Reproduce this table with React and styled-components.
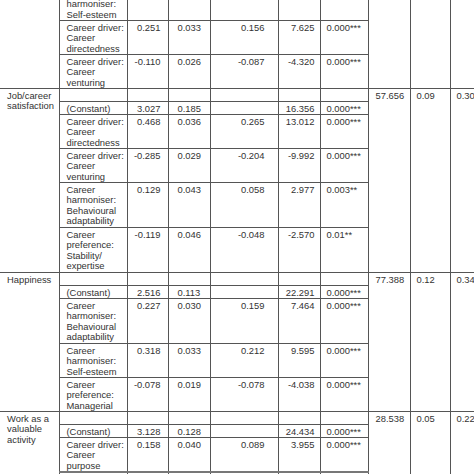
import React from 'react';
import styled, { createGlobalStyle } from 'styled-components';

const GlobalStyle = createGlobalStyle`
  html, body {
    margin: 0;
    padding: 0;
    background: #fff;
    overflow: hidden;
  }
`;

const Page = styled.div`
  width: 474px;
  height: 474px;
  overflow: hidden;
  background: #fff;
`;

const Table = styled.table`
  border-collapse: collapse;
  table-layout: fixed;
  width: 510px;
  margin-top: -14px;
  font-family: "Liberation Sans", Arial, sans-serif;
  font-size: 9.4px;
  line-height: 10.5px;
  color: #333;
`;

const Col = styled.col`
  width: ${p => p.$w}px;
`;

const Row = styled.tr`
  height: ${p => p.$h}px;
`;

const Cell = styled.td`
  border: 1px solid #555;
  border-top-width: ${p => (p.$thickTop ? '2px' : '1px')};
  border-top-color: ${p => (p.$thickTop ? '#777' : '#555')};
  padding: 1.5px ${p => p.$right || 2}px 0 ${p => p.$left || 6}px;
  vertical-align: top;
  text-align: ${p => p.$align || 'left'};
  white-space: nowrap;
  overflow: hidden;
`;

const LabelCell = styled.td`
  border: 1px solid #555;
  border-left: none;
  padding: 1.5px 2px 0 7px;
  vertical-align: top;
  white-space: nowrap;
`;

const StatCell = styled.td`
  border: 1px solid #555;
  padding: 1.5px 2px 0 ${p => p.$left || 6}px;
  vertical-align: top;
  white-space: nowrap;
  overflow: hidden;
`;

const widths = [59, 68, 41, 42, 68, 42, 48, 42, 40, 60];
const rowHeights = { 1: 13, 2: 24, 3: 34, 4: 45 };

const groups = [
  {
    label: [],
    stats: ['', '', ''],
    header: false,
    rows: [
      { pred: ['Career', 'harmoniser:', 'Self-esteem'], b: '', se: '', beta: '', t: '', p: '' },
      { pred: ['Career driver:', 'Career', 'directedness'], b: '0.251', se: '0.033', beta: '0.156', t: '7.625', p: '0.000***' },
      { pred: ['Career driver:', 'Career', 'venturing'], b: '-0.110', se: '0.026', beta: '-0.087', t: '-4.320', p: '0.000***' },
    ],
  },
  {
    label: ['Job/career', 'satisfaction'],
    stats: ['57.656', '0.09', '0.30'],
    header: true,
    rows: [
      { pred: ['(Constant)'], b: '3.027', se: '0.185', beta: '', t: '16.356', p: '0.000***' },
      { pred: ['Career driver:', 'Career', 'directedness'], b: '0.468', se: '0.036', beta: '0.265', t: '13.012', p: '0.000***' },
      { pred: ['Career driver:', 'Career', 'venturing'], b: '-0.285', se: '0.029', beta: '-0.204', t: '-9.992', p: '0.000***' },
      { pred: ['Career', 'harmoniser:', 'Behavioural', 'adaptability'], b: '0.129', se: '0.043', beta: '0.058', t: '2.977', p: '0.003**' },
      { pred: ['Career', 'preference:', 'Stability/', 'expertise'], b: '-0.119', se: '0.046', beta: '-0.048', t: '-2.570', p: '0.01**' },
    ],
  },
  {
    label: ['Happiness'],
    stats: ['77.388', '0.12', '0.34'],
    header: true,
    rows: [
      { pred: ['(Constant)'], b: '2.516', se: '0.113', beta: '', t: '22.291', p: '0.000***' },
      { pred: ['Career', 'harmoniser:', 'Behavioural', 'adaptability'], b: '0.227', se: '0.030', beta: '0.159', t: '7.464', p: '0.000***' },
      { pred: ['Career', 'harmoniser:', 'Self-esteem'], b: '0.318', se: '0.033', beta: '0.212', t: '9.595', p: '0.000***' },
      { pred: ['Career', 'preference:', 'Managerial'], b: '-0.078', se: '0.019', beta: '-0.078', t: '-4.038', p: '0.000***' },
    ],
  },
  {
    label: ['Work as a', 'valuable', 'activity'],
    stats: ['28.538', '0.05', '0.22'],
    header: true,
    tail: true,
    rows: [
      { pred: ['(Constant)'], b: '3.128', se: '0.128', beta: '', t: '24.434', p: '0.000***' },
      { pred: ['Career driver:', 'Career', 'purpose'], b: '0.158', se: '0.040', beta: '0.089', t: '3.955', p: '0.000***' },
    ],
  },
];

const lines = arr => arr.map((l, i) => (
  <React.Fragment key={i}>
    {i > 0 && <br />}
    {l}
  </React.Fragment>
));

const valueCells = (r, extra = {}) => [
  <Cell key="pred" $left={7} {...extra}>{lines(r.pred)}</Cell>,
  <Cell key="b" $align="right" $right={7} {...extra}>{r.b}</Cell>,
  <Cell key="se" $left={9} {...extra}>{r.se}</Cell>,
  <Cell key="beta" $align="right" $right={13} {...extra}>{r.beta}</Cell>,
  <Cell key="t" $align="right" $right={5} {...extra}>{r.t}</Cell>,
  <Cell key="p" $left={6} {...extra}>{r.p}</Cell>,
];

const emptyRow = { pred: ['\u00a0'], b: '', se: '', beta: '', t: '', p: '' };

function groupRows(g, gi) {
  const body = [];
  if (g.header) body.push({ row: emptyRow, h: 13 });
  g.rows.forEach(r => body.push({ row: r, h: rowHeights[r.pred.length] }));
  if (g.tail) body.push({ row: emptyRow, h: 34, thick: true });
  const span = body.length;

  return body.map((item, i) => (
    <Row key={`${gi}-${i}`} $h={item.h}>
      {i === 0 && <LabelCell rowSpan={span}>{lines(g.label)}</LabelCell>}
      {valueCells(item.row, item.thick ? { $thickTop: true } : {})}
      {i === 0 && <StatCell rowSpan={span} $left={7}>{g.stats[0]}</StatCell>}
      {i === 0 && <StatCell rowSpan={span}>{g.stats[1]}</StatCell>}
      {i === 0 && <StatCell rowSpan={span}>{g.stats[2]}</StatCell>}
    </Row>
  ));
}

export default function App() {
  return (
    <Page>
      <GlobalStyle />
      <Table>
        <colgroup>
          {widths.map((w, i) => <Col key={i} $w={w} />)}
        </colgroup>
        <tbody>
          {groups.map((g, gi) => groupRows(g, gi))}
        </tbody>
      </Table>
    </Page>
  );
}
